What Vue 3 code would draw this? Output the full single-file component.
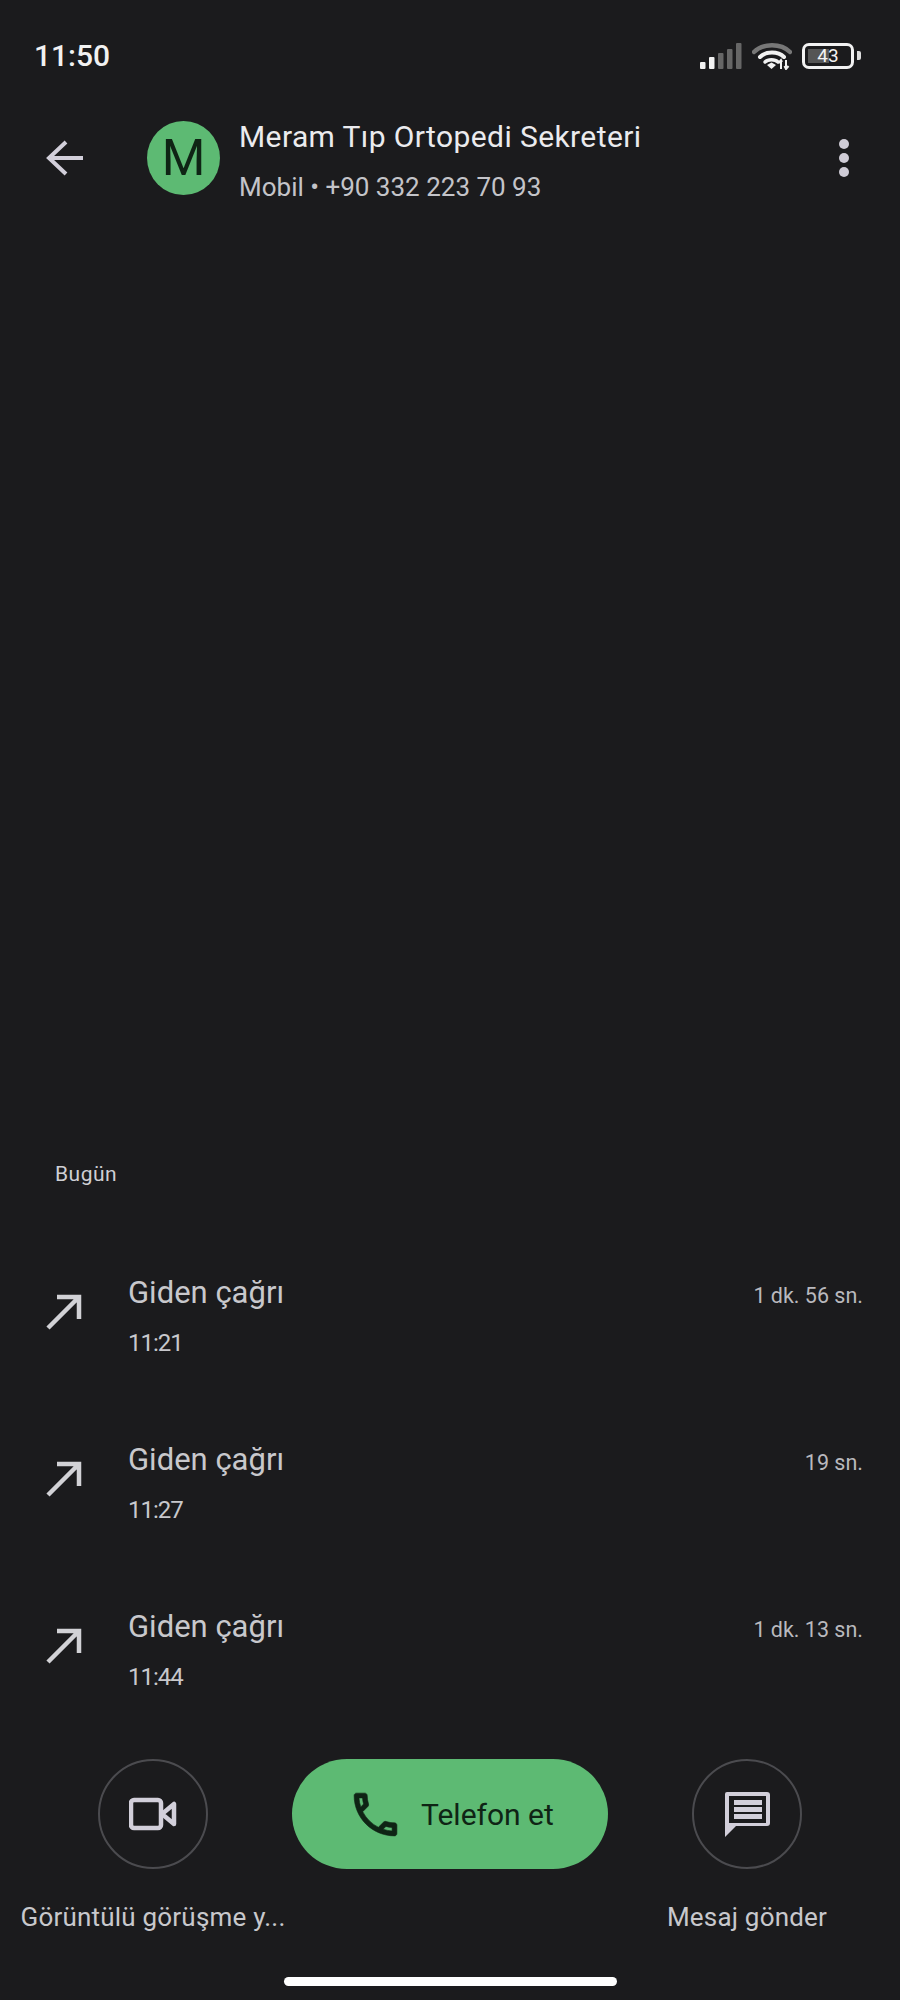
<template>
  <div class="call-details">
    <div class="status-bar">
      <span class="clock">11:50</span>
      <div class="status-icons">
        <svg class="signal" width="42" height="26" viewBox="0 0 42 26">
          <rect x="0" y="19" width="5.5" height="7" rx="1" fill="#f2f2f2" />
          <rect x="9" y="14" width="5.5" height="12" rx="1" fill="#f2f2f2" />
          <rect x="18" y="10" width="5.5" height="16" rx="1" fill="#666" />
          <rect x="27" y="6" width="5.5" height="20" rx="1" fill="#666" />
          <rect x="36" y="0" width="5.5" height="26" rx="1" fill="#666" />
        </svg>
        <svg class="wifi" width="40" height="28" viewBox="0 0 40 28" fill="none">
          <path d="M2 10 C11 1 29 1 38 10" stroke="#777" stroke-width="4.5" stroke-linecap="round" />
          <path d="M8 15 C14 9 26 9 32 15" stroke="#f2f2f2" stroke-width="4" stroke-linecap="round" />
          <path d="M13 20 C16 17 23 17 26 20" stroke="#f2f2f2" stroke-width="3.5" stroke-linecap="round" />
          <path d="M15 23 L19.5 20.5 L24 23 L19.5 27 Z" fill="#f2f2f2" />
          <path d="M29 27 V18 M26.5 21 L29 18 L30 20 M34 18 V27 M32.5 24 L34 27 L36.5 24" stroke="#f2f2f2" stroke-width="2" />
        </svg>
        <div class="battery">
          <div class="battery-body">
            <div class="battery-fill"></div>
            <span class="battery-level">43</span>
          </div>
          <div class="battery-nub"></div>
        </div>
      </div>
    </div>

    <header class="contact-header">
      <svg class="back" width="38" height="36" viewBox="0 0 38 36" fill="none">
        <path d="M37 18 H4 M20 2 L3 18 L20 34" stroke="#d2cfda" stroke-width="4" />
      </svg>
      <div class="avatar">M</div>
      <div class="contact-info">
        <div class="contact-name">Meram Tıp Ortopedi Sekreteri</div>
        <div class="contact-number">Mobil • +90 332 223 70 93</div>
      </div>
      <div class="more">
        <span></span>
        <span></span>
        <span></span>
      </div>
    </header>

    <div class="spacer"></div>

    <div class="day-label">Bugün</div>
    <ul class="call-list">
      <li v-for="call in calls" :key="call.time" class="call-row">
        <svg class="call-arrow" width="36" height="36" viewBox="0 0 36 36" fill="none">
          <path d="M2 34 L32 4 M11 3 H33 V25" stroke="#d2d2d6" stroke-width="4.5" />
        </svg>
        <div class="call-text">
          <div class="call-type">Giden çağrı</div>
          <div class="call-time">{{ call.time }}</div>
        </div>
        <span class="call-duration">{{ call.duration }}</span>
      </li>
    </ul>

    <div class="actions">
      <div class="action">
        <button class="round-btn">
          <svg width="48" height="34" viewBox="0 0 48 34" fill="none">
            <rect x="2" y="3" width="30" height="28" rx="3" stroke="#d2cfda" stroke-width="4.5" />
            <path d="M33 17 L45 7 V27 Z" stroke="#d2cfda" stroke-width="4.5" stroke-linejoin="round" />
          </svg>
        </button>
        <span class="action-label">Görüntülü görüşme y...</span>
      </div>
      <button class="call-btn">
        <svg width="57" height="57" viewBox="0 0 24 24" fill="#0f2415" stroke="#0f2415" stroke-width="0.25">
          <path d="M6.54 5c.06.89.21 1.76.45 2.59l-1.2 1.2c-.41-1.2-.67-2.47-.76-3.79h1.51m9.86 12.02c.85.24 1.72.39 2.6.45v1.49c-1.32-.09-2.59-.35-3.8-.75l1.2-1.19M7.5 3H4c-.55 0-1 .45-1 1 0 9.39 7.61 17 17 17 .55 0 1-.45 1-1v-3.49c0-.55-.45-1-1-1-1.24 0-2.45-.2-3.57-.57-.1-.04-.21-.05-.31-.05-.26 0-.51.1-.71.29l-2.2 2.2c-2.83-1.45-5.15-3.76-6.59-6.59l2.2-2.2c.28-.28.36-.67.25-1.02C8.7 6.45 8.5 5.25 8.5 4c0-.55-.45-1-1-1z" />
        </svg>
        <span>Telefon et</span>
      </button>
      <div class="action">
        <button class="round-btn">
          <svg width="46" height="46" viewBox="0 0 46 46">
            <path d="M3 1 H43 Q46 1 46 4 V32 Q46 35 43 35 H12 L1 46 V3 Q1 1 3 1 Z" fill="#d2cfda" />
            <path d="M5 5 H42 V32 H5 Z" fill="#1b1b1d" />
            <path d="M10 9 H38 V14 H10 Z M10 16 H38 V21 H10 Z M10 23 H38 V28 H10 Z" fill="#d2cfda" />
          </svg>
        </button>
        <span class="action-label">Mesaj gönder</span>
      </div>
    </div>

    <div class="home-bar"></div>
  </div>
</template>

<script setup>
const calls = [
  { time: '11:21', duration: '1 dk. 56 sn.' },
  { time: '11:27', duration: '19 sn.' },
  { time: '11:44', duration: '1 dk. 13 sn.' }
]
</script>

<style>
html,
body {
  margin: 0;
  background: #1b1b1d;
}
</style>

<style scoped>
.call-details {
  width: 900px;
  height: 2000px;
  display: flex;
  flex-direction: column;
  background: #1b1b1d;
  color: #d2d2d6;
  font-family: Roboto, "Liberation Sans", sans-serif;
  overflow: hidden;
}

.status-bar {
  height: 41px;
  margin-top: 35px;
  padding: 0 39px 0 34px;
  display: flex;
  align-items: center;
  justify-content: space-between;
}

.clock {
  font-size: 30px;
  font-weight: 500;
  color: #f1f1f1;
}

.status-icons {
  display: flex;
  align-items: center;
  gap: 10px;
}

.battery {
  display: flex;
  align-items: center;
  gap: 3px;
}

.battery-body {
  position: relative;
  width: 46px;
  height: 20px;
  border: 3px solid #f2f2f2;
  border-radius: 7px;
  display: flex;
  align-items: center;
  justify-content: center;
}

.battery-fill {
  position: absolute;
  left: 3px;
  top: 3px;
  bottom: 3px;
  width: 21px;
  background: #555;
}

.battery-level {
  position: relative;
  font-size: 19px;
  color: #f2f2f2;
}

.battery-nub {
  width: 4px;
  height: 9px;
  background: #ddd;
  border-radius: 0 2px 2px 0;
}

.contact-header {
  margin-top: 45px;
  height: 74px;
  padding-left: 46px;
  display: flex;
  align-items: center;
}

.avatar {
  width: 73px;
  height: 74px;
  margin-left: 63px;
  border-radius: 50%;
  background: #5dba73;
  color: #0f2415;
  font-size: 50px;
  line-height: 74px;
  text-align: center;
  flex-shrink: 0;
}

.contact-info {
  margin: 6px 0 0 19px;
  flex: 1;
}

.contact-name {
  font-size: 30px;
  line-height: 34px;
  letter-spacing: 0.4px;
  color: #ebebee;
}

.contact-number {
  margin-top: 18px;
  font-size: 26px;
  line-height: 30px;
  color: #c4c4c9;
}

.more {
  width: 10px;
  margin-right: 51px;
  display: flex;
  flex-direction: column;
  gap: 4px;
}

.more span {
  width: 10px;
  height: 10px;
  border-radius: 50%;
  background: #cfccd6;
}

.spacer {
  flex: 1;
}

.day-label {
  padding-left: 55px;
  font-size: 21px;
  line-height: 28px;
  letter-spacing: 0.5px;
  color: #cfcfd4;
}

.call-list {
  list-style: none;
  margin: 88px 0 0;
  padding: 0;
}

.call-row {
  height: 167px;
  padding: 0 37px 0 46px;
  box-sizing: border-box;
  display: flex;
  align-items: flex-start;
}

.call-row:last-child {
  height: 149px;
}

.call-arrow {
  margin-top: 18px;
  flex-shrink: 0;
}

.call-text {
  margin: -1px 0 0 46px;
  flex: 1;
}

.call-type {
  font-size: 31px;
  line-height: 36px;
  color: #c8c8cc;
}

.call-time {
  margin-top: 17px;
  font-size: 24px;
  line-height: 30px;
  letter-spacing: -1px;
  color: #c8c8cc;
}

.call-duration {
  margin-top: 6px;
  font-size: 21.5px;
  line-height: 28px;
  color: #b9b9be;
}

.actions {
  padding-left: 98px;
  display: flex;
  align-items: flex-start;
  gap: 84px;
}

.action {
  width: 110px;
  display: flex;
  flex-direction: column;
  align-items: center;
}

.round-btn {
  width: 110px;
  height: 110px;
  padding: 0;
  box-sizing: border-box;
  border: 2px solid #4b4b4f;
  border-radius: 50%;
  background: transparent;
  display: flex;
  align-items: center;
  justify-content: center;
}

.action-label {
  margin-top: 32px;
  font-size: 26px;
  line-height: 32px;
  letter-spacing: 0.2px;
  color: #c8c8cc;
  white-space: nowrap;
}

.call-btn {
  width: 316px;
  height: 110px;
  padding: 0 0 0 55px;
  box-sizing: border-box;
  border: none;
  border-radius: 55px;
  background: #5dba73;
  color: #0f2415;
  font-family: inherit;
  font-size: 30px;
  display: flex;
  align-items: center;
  gap: 17px;
}

.home-bar {
  width: 333px;
  height: 9px;
  margin: 44px auto 14px;
  border-radius: 5px;
  background: #fff;
}
</style>
